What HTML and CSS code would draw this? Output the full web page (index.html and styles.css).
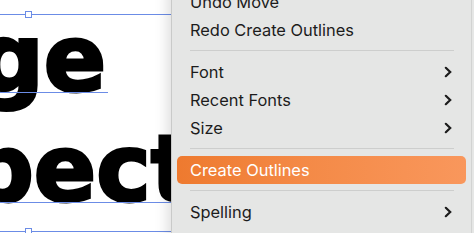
FILE: index.html
```html
<!DOCTYPE html>
<html>
<head>
<meta charset="utf-8">
<link rel="stylesheet" href="styles.css">
</head>
<body>
<div class="screen">
  <div class="canvas">
    <div class="word word-1">ge</div>
    <div class="word word-2">pect</div>
    <div class="guide guide-top"></div>
    <div class="guide guide-base1"></div>
    <div class="guide guide-base2"></div>
    <div class="guide guide-bottom"></div>
    <div class="handle handle-top"></div>
    <div class="handle handle-bottom"></div>
  </div>
  <div class="menu">
    <div class="item"><span>Undo Move</span></div>
    <div class="item"><span>Redo Create Outlines</span></div>
    <div class="sep"></div>
    <div class="item"><span>Font</span><svg class="chev" viewBox="0 0 8 12" width="8" height="12"><path d="M1.8 1.8 L6.2 6 L1.8 10.2"/></svg></div>
    <div class="item"><span>Recent Fonts</span><svg class="chev" viewBox="0 0 8 12" width="8" height="12"><path d="M1.8 1.8 L6.2 6 L1.8 10.2"/></svg></div>
    <div class="item"><span>Size</span><svg class="chev" viewBox="0 0 8 12" width="8" height="12"><path d="M1.8 1.8 L6.2 6 L1.8 10.2"/></svg></div>
    <div class="sep"></div>
    <div class="item active"><span>Create Outlines</span></div>
    <div class="sep"></div>
    <div class="item"><span>Spelling</span><svg class="chev" viewBox="0 0 8 12" width="8" height="12"><path d="M1.8 1.8 L6.2 6 L1.8 10.2"/></svg></div>
  </div>
  <div class="strip"></div>
</div>
</body>
</html>
```

FILE: styles.css
```css
html, body {
  margin: 0;
  padding: 0;
  background: #ffffff;
}
.screen {
  display: flex;
  width: 474px;
  height: 233px;
  overflow: hidden;
}
.canvas {
  position: relative;
  width: 171px;
  height: 233px;
  flex: none;
  background: #ffffff;
  overflow: hidden;
}
.word {
  position: absolute;
  font-family: "DejaVu Sans", sans-serif;
  font-weight: 700;
  font-size: 92px;
  line-height: 92px;
  color: #000;
  white-space: nowrap;
  -webkit-text-stroke: 3px #000;
}
.word-1 { left: -22px; top: 14px; }
.word-2 { left: -32px; top: 124px; }
.guide {
  position: absolute;
  left: 0;
  height: 1.5px;
  background: #6b8ce6;
}
.guide-top { top: 13.5px; width: 171px; }
.guide-base1 { top: 91.5px; width: 108px; }
.guide-base2 { top: 201.5px; width: 171px; }
.guide-bottom { top: 230.5px; width: 171px; }
.handle {
  position: absolute;
  left: 25px;
  width: 5px;
  height: 5px;
  border: 1.3px solid #6b8ce6;
  background: #fff;
}
.handle-top { top: 11px; }
.handle-bottom { top: 228px; }
.menu {
  position: relative;
  z-index: 1;
  width: 289px;
  flex: none;
  padding: 0 5px;
  margin-top: -12px;
  height: 260px;
  background: #e5e6e5;
  border-left: 1px solid #c9cac9;
  border-right: 1px solid #d2d3d2;
  box-shadow: -4px 0 12px rgba(0, 0, 0, 0.13);
  display: flex;
  flex-direction: column;
  font-family: "Inter", "Liberation Sans", sans-serif;
  font-size: 16.4px;
  color: #1c1c1c;
}
.item {
  height: 28px;
  flex: none;
  display: flex;
  align-items: center;
  justify-content: space-between;
  padding: 0 14px 0 13px;
  border-radius: 5px;
}
.item.active {
  background: linear-gradient(90deg, #ee7a2f 0%, #f48a47 45%, #f9975c 100%);
  color: #ffffff;
}
.chev {
  fill: none;
  stroke: #1c1c1c;
  stroke-width: 2.2;
  stroke-linecap: round;
  stroke-linejoin: miter;
}
.sep {
  flex: none;
  height: 14px;
  margin: 0 12px 0 13px;
  position: relative;
}
.sep::after {
  content: "";
  position: absolute;
  left: 0;
  right: 0;
  top: 6px;
  height: 1px;
  background: #cdcecd;
}
.strip {
  flex: 1;
  background: #ecedec;
}
```
